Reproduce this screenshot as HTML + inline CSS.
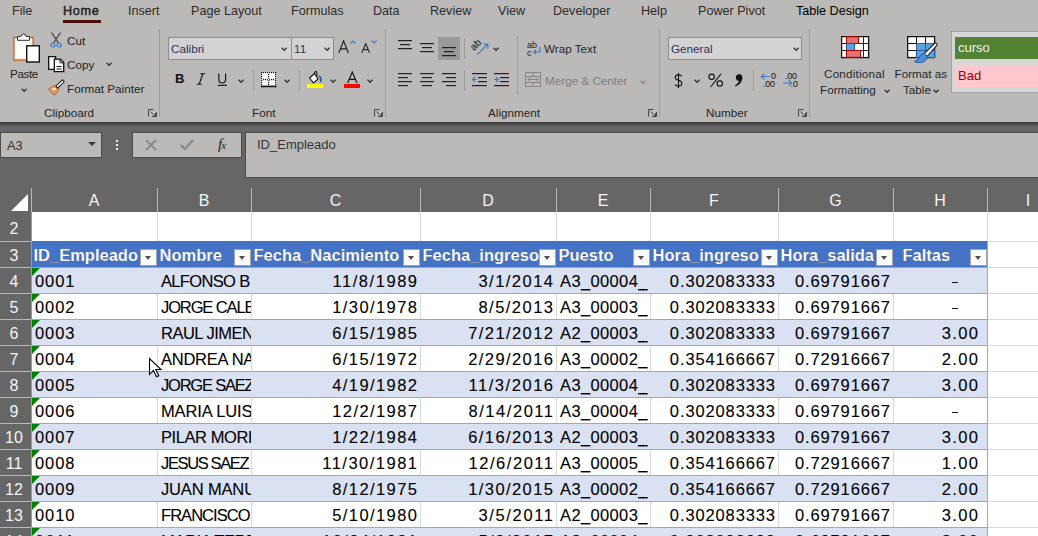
<!DOCTYPE html><html><head><meta charset="utf-8"><style>
*{margin:0;padding:0;box-sizing:border-box}
html,body{width:1038px;height:536px;overflow:hidden;background:#666666;font-family:"Liberation Sans",sans-serif}
.a{position:absolute;white-space:nowrap}
.t{font-size:11.7px;color:#262626;line-height:14px}
.tab{font-size:12.6px;color:#2b2b2b;line-height:16px}
.sep{position:absolute;width:1px;background:#9d9d9d}
.chev{position:absolute;width:5px;height:5px;border-right:1.2px solid #333;border-bottom:1.2px solid #333;transform:rotate(45deg)}
.cell{position:absolute;font-size:16.5px;line-height:20px;color:#000;white-space:nowrap;overflow:hidden;-webkit-text-stroke:0.1px #000}
.hd{font-weight:bold;color:#fff}
.colh{position:absolute;top:188px;height:24px;color:#f4f4f4;font-size:16px;line-height:26px;text-align:center}
.rowh{position:absolute;left:0;width:28px;color:#f4f4f4;font-size:16px;text-align:center}
.flt{position:absolute;width:17px;height:17px;background:#fbfbfb;border:1px solid #a6a6a6}
.flt:after{content:"";position:absolute;left:4px;top:6px;border-left:3.5px solid transparent;border-right:3.5px solid transparent;border-top:4px solid #505050}
.tri{position:absolute;width:0;height:0;border-top:8px solid #008000;border-right:8px solid transparent}
</style></head><body>
<div class="a" style="left:0;top:0;width:1038px;height:122px;background:#bbbab8"></div>
<div class="a" style="left:0;top:122px;width:1038px;height:2px;background:#3e3e3e"></div>
<div class="a" style="left:0;top:124px;width:1038px;height:2px;background:#545454"></div>
<div class="a tab" style="left:12px;top:3px;color:#2b2b2b;font-weight:normal;">File</div>
<div class="a tab" style="left:63px;top:3px;color:#2b2b2b;font-weight:normal;-webkit-text-stroke:0.45px #222;color:#222;letter-spacing:0.7px">Home</div>
<div class="a tab" style="left:128px;top:3px;color:#2b2b2b;font-weight:normal;">Insert</div>
<div class="a tab" style="left:191px;top:3px;color:#2b2b2b;font-weight:normal;">Page Layout</div>
<div class="a tab" style="left:291px;top:3px;color:#2b2b2b;font-weight:normal;">Formulas</div>
<div class="a tab" style="left:373px;top:3px;color:#2b2b2b;font-weight:normal;">Data</div>
<div class="a tab" style="left:430px;top:3px;color:#2b2b2b;font-weight:normal;">Review</div>
<div class="a tab" style="left:498px;top:3px;color:#2b2b2b;font-weight:normal;">View</div>
<div class="a tab" style="left:553px;top:3px;color:#2b2b2b;font-weight:normal;">Developer</div>
<div class="a tab" style="left:641px;top:3px;color:#2b2b2b;font-weight:normal;">Help</div>
<div class="a tab" style="left:698px;top:3px;color:#2b2b2b;font-weight:normal;">Power Pivot</div>
<div class="a tab" style="left:796px;top:3px;color:#000;font-weight:normal;">Table Design</div>
<div class="a" style="left:63px;top:20px;width:38px;height:3px;background:#4d0d0d"></div>
<div class="sep" style="left:159px;top:29px;height:88px"></div>
<div class="sep" style="left:385px;top:29px;height:88px"></div>
<div class="sep" style="left:659px;top:29px;height:88px"></div>
<div class="sep" style="left:809px;top:29px;height:88px"></div>
<div class="a t" style="left:44px;top:106px">Clipboard</div>
<div class="a t" style="left:252px;top:106px">Font</div>
<div class="a t" style="left:488px;top:106px">Alignment</div>
<div class="a t" style="left:706px;top:106px">Number</div>
<svg class="a" style="left:148px;top:109px" width="9" height="8" viewBox="0 0 9 8"><path d="M0.5 7.5V0.5H5.5M8.5 3V7.5H4M2.5 2.5L7.5 7.5M4 7.5H7.5V4" fill="none" stroke="#444" stroke-width="1"/></svg>
<svg class="a" style="left:374px;top:109px" width="9" height="8" viewBox="0 0 9 8"><path d="M0.5 7.5V0.5H5.5M8.5 3V7.5H4M2.5 2.5L7.5 7.5M4 7.5H7.5V4" fill="none" stroke="#444" stroke-width="1"/></svg>
<svg class="a" style="left:648px;top:109px" width="9" height="8" viewBox="0 0 9 8"><path d="M0.5 7.5V0.5H5.5M8.5 3V7.5H4M2.5 2.5L7.5 7.5M4 7.5H7.5V4" fill="none" stroke="#444" stroke-width="1"/></svg>
<svg class="a" style="left:798px;top:109px" width="9" height="8" viewBox="0 0 9 8"><path d="M0.5 7.5V0.5H5.5M8.5 3V7.5H4M2.5 2.5L7.5 7.5M4 7.5H7.5V4" fill="none" stroke="#444" stroke-width="1"/></svg>
<svg class="a" style="left:12px;top:32px" width="30" height="32" viewBox="0 0 30 32">
<rect x="2" y="5.7" width="19" height="22.2" fill="#fff" stroke="#c87533" stroke-width="2"/>
<rect x="3" y="6.7" width="17" height="20.2" fill="none" stroke="#f3dcc4" stroke-width="1"/>
<path d="M5.5 8.3V4.5H9A2.5 2.5 0 0 1 14 4.5H17.5V8.3Z" fill="#fff" stroke="#333" stroke-width="1"/>
<rect x="14.7" y="13.8" width="12.6" height="16.2" fill="#fff" stroke="#111" stroke-width="1.4"/>
</svg>
<div class="a t" style="left:10px;top:67px;color:#222;letter-spacing:-0.4px">Paste</div>
<svg class="a" style="left:20.5px;top:87.5px" width="7" height="5" viewBox="0 0 7 5"><path d="M0.6 0.8L3.1 3.3L5.6 0.8" fill="none" stroke="#333" stroke-width="1.25"/></svg>
<svg class="a" style="left:50px;top:32px" width="12" height="16" viewBox="0 0 12 16">
<path d="M1.5 0.5L8.5 11M10.5 0.5L3.5 11" stroke="#333" stroke-width="1.1" fill="none"/>
<circle cx="3" cy="13" r="2" fill="none" stroke="#3b7ad0" stroke-width="1.2"/>
<circle cx="9" cy="13" r="2" fill="none" stroke="#3b7ad0" stroke-width="1.2"/>
</svg>
<div class="a t" style="left:67px;top:34px;color:#222">Cut</div>
<svg class="a" style="left:48px;top:56px" width="17" height="17" viewBox="0 0 17 17">
<path d="M7.6 3V0.7H0.7V13.4H6" fill="#fff" stroke="#111" stroke-width="1.3"/>
<path d="M6.3 3.1H12.2L15.7 6.6V15.6H6.3Z" fill="#fff" stroke="#111" stroke-width="1.3"/>
<path d="M12 3.1V6.8H15.7" fill="none" stroke="#111" stroke-width="1"/>
<path d="M8.5 10.5H13.5M8.5 13H13.5" stroke="#111" stroke-width="1"/>
</svg>
<div class="a t" style="left:67px;top:58px;color:#222">Copy</div>
<svg class="a" style="left:106px;top:62px" width="7" height="5" viewBox="0 0 7 5"><path d="M0.6 0.8L3.1 3.3L5.6 0.8" fill="none" stroke="#333" stroke-width="1.25"/></svg>
<svg class="a" style="left:48px;top:79px" width="17" height="17" viewBox="0 0 17 17">
<path d="M6.5 6 L11 10.5 L6.8 16.2 Q3 14 0.4 10.2 Z" fill="#e39a5a" stroke="#b8672a" stroke-width="1"/>
<path d="M3 10.2 L7.5 8.5 L8 11 Z" fill="#fff"/>
<path d="M16.2 2.6 L14.4 0.8 L7.8 7.2 L9.8 9.2 Z" fill="#fff" stroke="#222" stroke-width="1.1"/>
</svg>
<div class="a t" style="left:67px;top:82px;color:#222">Format Painter</div>
<div class="a" style="left:168px;top:37px;width:124px;height:23px;background:#d3d3d3;border:1px solid #8e8e8e"></div>
<div class="a" style="left:291px;top:37px;width:43px;height:23px;background:#d3d3d3;border:1px solid #8e8e8e"></div>
<div class="a t" style="left:171px;top:42px;color:#2f2f5f">Calibri</div>
<div class="a t" style="left:294px;top:42px;color:#2f2f5f">11</div>
<svg class="a" style="left:281px;top:47.2px" width="7" height="5" viewBox="0 0 7 5"><path d="M0.6 0.8L3.1 3.3L5.6 0.8" fill="none" stroke="#333" stroke-width="1.25"/></svg>
<svg class="a" style="left:324px;top:47.2px" width="7" height="5" viewBox="0 0 7 5"><path d="M0.6 0.8L3.1 3.3L5.6 0.8" fill="none" stroke="#333" stroke-width="1.25"/></svg>
<svg class="a" style="left:338px;top:40px" width="12" height="14" viewBox="0 0 12 14"><path d="M0.8 13L5.6 0.8L10.4 13M2.6 8.9H8.6" fill="none" stroke="#222" stroke-width="1.15"/></svg>
<svg class="a" style="left:361px;top:43px" width="10" height="11" viewBox="0 0 10 11"><path d="M0.8 9.9L4.7 0.6L8.6 9.9M2.2 6.6H7.2" fill="none" stroke="#222" stroke-width="1.1"/></svg>
<svg class="a" style="left:350px;top:40px" width="6" height="4"><path d="M0.5 3.5L3 1L5.5 3.5" stroke="#3b7ad0" fill="none" stroke-width="1.1"/></svg>
<svg class="a" style="left:371px;top:40px" width="6" height="4"><path d="M0.5 0.5L3 3L5.5 0.5" stroke="#3b7ad0" fill="none" stroke-width="1.1"/></svg>
<div class="a" style="left:175px;top:72px;font-size:13px;font-weight:bold;color:#111;line-height:14px">B</div>
<svg class="a" style="left:196px;top:73px" width="10" height="12" viewBox="0 0 10 12"><path d="M6.8 0.8L3.2 11.2M4.2 0.8H9.2M0.8 11.2H5.8" fill="none" stroke="#111" stroke-width="1.1"/></svg>
<svg class="a" style="left:217px;top:73px" width="11" height="14" viewBox="0 0 11 14"><path d="M1.8 0.5V6.5Q1.8 10 5.2 10Q8.6 10 8.6 6.5V0.5" fill="none" stroke="#111" stroke-width="1.15"/><rect x="0.8" y="11.8" width="9" height="1.1" fill="#111"/></svg>
<svg class="a" style="left:237.5px;top:78.8px" width="7" height="5" viewBox="0 0 7 5"><path d="M0.6 0.8L3.1 3.3L5.6 0.8" fill="none" stroke="#333" stroke-width="1.25"/></svg>
<div class="sep" style="left:253px;top:70px;height:21px"></div>
<svg class="a" style="left:261px;top:72px" width="16" height="16" viewBox="0 0 16 16"><rect x="0" y="0" width="15.2" height="15" fill="#fff"/><g fill="#111"><rect x="0" y="0" width="1.2" height="1.2"/><rect x="0" y="14" width="1.2" height="1.2"/><rect x="0" y="0" width="1.2" height="1.2"/><rect x="14" y="0" width="1.2" height="1.2"/><rect x="2" y="0" width="1.2" height="1.2"/><rect x="2" y="14" width="1.2" height="1.2"/><rect x="0" y="2" width="1.2" height="1.2"/><rect x="14" y="2" width="1.2" height="1.2"/><rect x="4" y="0" width="1.2" height="1.2"/><rect x="4" y="14" width="1.2" height="1.2"/><rect x="0" y="4" width="1.2" height="1.2"/><rect x="14" y="4" width="1.2" height="1.2"/><rect x="6" y="0" width="1.2" height="1.2"/><rect x="6" y="14" width="1.2" height="1.2"/><rect x="0" y="6" width="1.2" height="1.2"/><rect x="14" y="6" width="1.2" height="1.2"/><rect x="8" y="0" width="1.2" height="1.2"/><rect x="8" y="14" width="1.2" height="1.2"/><rect x="0" y="8" width="1.2" height="1.2"/><rect x="14" y="8" width="1.2" height="1.2"/><rect x="10" y="0" width="1.2" height="1.2"/><rect x="10" y="14" width="1.2" height="1.2"/><rect x="0" y="10" width="1.2" height="1.2"/><rect x="14" y="10" width="1.2" height="1.2"/><rect x="12" y="0" width="1.2" height="1.2"/><rect x="12" y="14" width="1.2" height="1.2"/><rect x="0" y="12" width="1.2" height="1.2"/><rect x="14" y="12" width="1.2" height="1.2"/><rect x="14" y="0" width="1.2" height="1.2"/><rect x="14" y="14" width="1.2" height="1.2"/><rect x="0" y="14" width="1.2" height="1.2"/><rect x="14" y="14" width="1.2" height="1.2"/><rect x="7" y="2" width="1.2" height="1.2"/><rect x="2" y="7" width="1.2" height="1.2"/><rect x="7" y="4" width="1.2" height="1.2"/><rect x="4" y="7" width="1.2" height="1.2"/><rect x="7" y="10" width="1.2" height="1.2"/><rect x="10" y="7" width="1.2" height="1.2"/><rect x="7" y="12" width="1.2" height="1.2"/><rect x="12" y="7" width="1.2" height="1.2"/></g><circle cx="7.6" cy="7.6" r="1.1" fill="none" stroke="#111" stroke-width="0.8"/><rect x="0" y="13.6" width="15.3" height="1.5" fill="#111"/></svg>
<svg class="a" style="left:283.5px;top:78.8px" width="7" height="5" viewBox="0 0 7 5"><path d="M0.6 0.8L3.1 3.3L5.6 0.8" fill="none" stroke="#333" stroke-width="1.25"/></svg>
<div class="sep" style="left:299px;top:70px;height:21px"></div>
<svg class="a" style="left:306px;top:70px" width="18" height="18" viewBox="0 0 18 18">
<path d="M3.6 8L8.5 3.5L12 9L7.5 12.9Z" fill="#fff" stroke="#111" stroke-width="1.1" stroke-linejoin="round"/>
<path d="M8.3 4Q8.6 1.3 10 1.6Q11.3 2 10.9 6.5" fill="none" stroke="#111" stroke-width="1.1"/>
<path d="M12.8 6.3Q15.2 6 14.8 12.3" stroke="#2f5fa8" fill="none" stroke-width="1.8"/>
<rect x="1" y="14" width="16.2" height="4" fill="#ffff00"/>
</svg>
<svg class="a" style="left:329.5px;top:78.8px" width="7" height="5" viewBox="0 0 7 5"><path d="M0.6 0.8L3.1 3.3L5.6 0.8" fill="none" stroke="#333" stroke-width="1.25"/></svg>
<svg class="a" style="left:346px;top:71px" width="13" height="13" viewBox="0 0 13 13"><path d="M1.6 12L6.3 1.1L11 12M3.3 8.3H9.3" fill="none" stroke="#111" stroke-width="1.15"/></svg>
<div class="a" style="left:344px;top:84px;width:16px;height:4px;background:#ff0000"></div>
<svg class="a" style="left:366.5px;top:78.8px" width="7" height="5" viewBox="0 0 7 5"><path d="M0.6 0.8L3.1 3.3L5.6 0.8" fill="none" stroke="#333" stroke-width="1.25"/></svg>
<div class="a" style="left:438px;top:37px;width:22px;height:23px;background:#9a9a9a"></div>
<svg class="a" style="left:398px;top:38px" width="16" height="14"><rect x="0" y="2" width="14" height="1.2" fill="#222"/><rect x="2" y="6" width="10" height="1.2" fill="#222"/><rect x="0" y="10" width="14" height="1.2" fill="#222"/></svg>
<svg class="a" style="left:420px;top:41px" width="16" height="14"><rect x="0" y="2" width="14" height="1.2" fill="#222"/><rect x="2" y="6" width="10" height="1.2" fill="#222"/><rect x="0" y="10" width="14" height="1.2" fill="#222"/></svg>
<svg class="a" style="left:442px;top:45px" width="16" height="14"><rect x="0" y="2" width="14" height="1.2" fill="#222"/><rect x="2" y="6" width="10" height="1.2" fill="#222"/><rect x="0" y="10" width="14" height="1.2" fill="#222"/></svg>
<svg class="a" style="left:398px;top:71px" width="16" height="18"><rect x="0" y="2" width="14" height="1.2" fill="#222"/><rect x="0" y="6" width="10" height="1.2" fill="#222"/><rect x="0" y="10" width="14" height="1.2" fill="#222"/><rect x="0" y="14" width="10" height="1.2" fill="#222"/></svg>
<svg class="a" style="left:420px;top:71px" width="16" height="18"><rect x="0" y="2" width="14" height="1.2" fill="#222"/><rect x="2" y="6" width="10" height="1.2" fill="#222"/><rect x="0" y="10" width="14" height="1.2" fill="#222"/><rect x="2" y="14" width="10" height="1.2" fill="#222"/></svg>
<svg class="a" style="left:442px;top:71px" width="16" height="18"><rect x="0" y="2" width="14" height="1.2" fill="#222"/><rect x="4" y="6" width="10" height="1.2" fill="#222"/><rect x="0" y="10" width="14" height="1.2" fill="#222"/><rect x="4" y="14" width="10" height="1.2" fill="#222"/></svg>
<div class="sep" style="left:464px;top:38px;height:21px"></div>
<div class="sep" style="left:464px;top:70px;height:21px"></div>
<div class="sep" style="left:517px;top:36px;height:58px"></div>
<svg class="a" style="left:470px;top:38px" width="20" height="18" viewBox="0 0 20 18">
<text x="0" y="0" font-size="10" font-family="Liberation Sans" fill="#111" transform="translate(4,13) rotate(-45)">ab</text>
<path d="M7.2 16.6L17.6 6.4M13.6 6.2H17.8V10.4" stroke="#3b7ad0" fill="none" stroke-width="1.2"/>
</svg>
<svg class="a" style="left:492.5px;top:46.8px" width="7" height="5" viewBox="0 0 7 5"><path d="M0.6 0.8L3.1 3.3L5.6 0.8" fill="none" stroke="#333" stroke-width="1.25"/></svg>
<svg class="a" style="left:472px;top:73px" width="16" height="14" viewBox="0 0 16 14">
<rect x="0" y="0" width="15" height="1.2" fill="#222"/><rect x="6" y="4" width="9" height="1.2" fill="#222"/>
<rect x="6" y="8" width="9" height="1.2" fill="#222"/><rect x="0" y="12" width="15" height="1.2" fill="#222"/>
<path d="M0.5 6.5H5M3 4L0.5 6.5L3 9" stroke="#3b7ad0" fill="none" stroke-width="1.1"/>
</svg>
<svg class="a" style="left:494px;top:73px" width="16" height="14" viewBox="0 0 16 14">
<rect x="0" y="0" width="15" height="1.2" fill="#222"/><rect x="6" y="4" width="9" height="1.2" fill="#222"/>
<rect x="6" y="8" width="9" height="1.2" fill="#222"/><rect x="0" y="12" width="15" height="1.2" fill="#222"/>
<path d="M0 6.5H4.5M2 4L4.5 6.5L2 9" stroke="#3b7ad0" fill="none" stroke-width="1.1"/>
</svg>
<svg class="a" style="left:527px;top:40px" width="16" height="17" viewBox="0 0 16 17">
<text x="0" y="8" font-size="9" font-family="Liberation Sans" fill="#222">ab</text>
<text x="0" y="16" font-size="9" font-family="Liberation Sans" fill="#222">c</text>
<path d="M13 7V12H7M9 10L7 12L9 14" stroke="#3b7ad0" fill="none" stroke-width="1.2"/>
</svg>
<div class="a t" style="left:544px;top:42px">Wrap Text</div>
<svg class="a" style="left:525px;top:72px" width="16" height="15" viewBox="0 0 16 15">
<rect x="0.5" y="0.5" width="15" height="14" fill="none" stroke="#888" stroke-width="1"/>
<path d="M0.5 4.5H15.5M0.5 10.5H15.5M8 0.5V4.5M8 10.5V14.5" stroke="#888"/>
<path d="M3 7.5H13M5 5.5L3 7.5L5 9.5M11 5.5L13 7.5L11 9.5" stroke="#888" fill="none"/>
</svg>
<div class="a t" style="left:545px;top:74px;color:#808080">Merge &amp; Center</div>
<svg class="a" style="left:640px;top:79.5px" width="7" height="5" viewBox="0 0 7 5"><path d="M0.6 0.8L3.1 3.3L5.6 0.8" fill="none" stroke="#888" stroke-width="1.25"/></svg>
<div class="a" style="left:668px;top:37px;width:134px;height:23px;background:#d3d3d3;border:1px solid #8e8e8e"></div>
<div class="a t" style="left:671px;top:42px;color:#2f2f5f">General</div>
<svg class="a" style="left:792.5px;top:47.4px" width="7" height="5" viewBox="0 0 7 5"><path d="M0.6 0.8L3.1 3.3L5.6 0.8" fill="none" stroke="#333" stroke-width="1.25"/></svg>
<svg class="a" style="left:674px;top:73px" width="9" height="15" viewBox="0 0 9 15"><path d="M7.8 3.3Q7 1.9 4.5 1.9Q1.2 1.9 1.2 4.5Q1.2 6.4 4.5 7.3Q7.9 8.2 7.9 10.6Q7.9 13.1 4.5 13.1Q2 13.1 0.9 11.6M4.5 0V15" fill="none" stroke="#111" stroke-width="1.1"/></svg>
<svg class="a" style="left:693.5px;top:79px" width="7" height="5" viewBox="0 0 7 5"><path d="M0.6 0.8L3.1 3.3L5.6 0.8" fill="none" stroke="#333" stroke-width="1.25"/></svg>
<svg class="a" style="left:708px;top:73px" width="16" height="15" viewBox="0 0 16 15"><circle cx="3.6" cy="3.8" r="2.7" fill="none" stroke="#111" stroke-width="1.1"/><circle cx="11.8" cy="10.6" r="2.7" fill="none" stroke="#111" stroke-width="1.1"/><path d="M13 0.8L2.6 14" stroke="#111" stroke-width="1.1"/></svg>
<svg class="a" style="left:734px;top:74px" width="10" height="13" viewBox="0 0 10 13"><path d="M5 0.3A3.3 3.3 0 0 1 8.4 3.7Q8.5 9.2 1.3 12.6L0.8 11.7Q4.6 9.2 5.3 6.8A3.2 3.2 0 0 1 5 0.3Z" fill="#111"/></svg>
<div class="sep" style="left:753px;top:70px;height:21px"></div>
<svg class="a" style="left:760px;top:72px" width="18" height="16" viewBox="0 0 18 16">
<path d="M1.5 4.5H9.5M4.3 1.7L1.5 4.5L4.3 7.3" stroke="#3b7ad0" fill="none" stroke-width="1.2"/>
<text x="11" y="7.3" font-size="9" font-family="Liberation Sans" fill="#111">0</text>
<text x="3" y="15" font-size="9" font-family="Liberation Sans" fill="#111" letter-spacing="-0.3">.00</text>
</svg>
<svg class="a" style="left:782px;top:72px" width="18" height="16" viewBox="0 0 18 16">
<text x="3" y="7.3" font-size="9" font-family="Liberation Sans" fill="#111" letter-spacing="-0.3">.00</text>
<path d="M1 11H9.5M6.7 8.2L9.5 11L6.7 13.8" stroke="#3b7ad0" fill="none" stroke-width="1.2"/>
<text x="8.5" y="15" font-size="9" font-family="Liberation Sans" fill="#111">.0</text>
</svg>
<svg class="a" style="left:841px;top:36px" width="29" height="23" viewBox="0 0 29 23">
<rect x="0.6" y="0.6" width="27" height="21" fill="#fff" stroke="#111" stroke-width="1.3"/>
<path d="M0.5 7.5H28M0.5 14.5H28M5.5 0.5V22M22.5 0.5V22" stroke="#222" stroke-width="1"/>
<rect x="5.5" y="0.8" width="12" height="6.7" fill="#e07272" stroke="#b00000" stroke-width="1"/>
<rect x="5.5" y="7.5" width="8" height="7" fill="#5ba3dc" stroke="#1f4fa0" stroke-width="1"/>
<path d="M13.5 8V14" stroke="#fff" stroke-width="0"/>
<rect x="5.5" y="14.5" width="14" height="6.8" fill="#e07272" stroke="#b00000" stroke-width="1"/>
</svg>
<div class="a t" style="left:824px;top:67px;letter-spacing:0.2px">Conditional</div>
<div class="a t" style="left:820px;top:83px">Formatting</div>
<svg class="a" style="left:883.5px;top:88.5px" width="7" height="5" viewBox="0 0 7 5"><path d="M0.6 0.8L3.1 3.3L5.6 0.8" fill="none" stroke="#333" stroke-width="1.25"/></svg>
<svg class="a" style="left:907px;top:36px" width="31" height="28" viewBox="0 0 31 28">
<rect x="0.6" y="0.6" width="27" height="21" fill="#fff" stroke="#111" stroke-width="1.3"/>
<rect x="9.5" y="7.5" width="18" height="14" fill="#5ba3dc" stroke="#2a5caa" stroke-width="1"/>
<path d="M0.5 7.5H9.5M0.5 14.5H9.5M9.5 0.5V7.5M18.5 0.5V7.5" stroke="#111" stroke-width="1"/>
<path d="M9.5 14.5H27.5M18.5 7.5V21.5" stroke="#2a5caa" stroke-width="1"/>
<path d="M28.3 6.8Q30.6 7.2 29.8 9.4L20.2 20.3L17.3 17.6Z" fill="#fff" stroke="#222" stroke-width="1.1"/>
<path d="M17 17.3L20.3 20.6Q19.5 25.5 14 26.5Q10 27.2 7.3 25.6Q10.8 25 12 21.8Q13 18 17 17.3Z" fill="#4f8fd8" stroke="#2a5caa" stroke-width="1"/>
</svg>
<div class="a t" style="left:894.5px;top:67px">Format as</div>
<div class="a t" style="left:903px;top:83px">Table</div>
<svg class="a" style="left:933px;top:88.5px" width="7" height="5" viewBox="0 0 7 5"><path d="M0.6 0.8L3.1 3.3L5.6 0.8" fill="none" stroke="#333" stroke-width="1.25"/></svg>
<div class="a" style="left:951px;top:31px;width:100px;height:62px;background:#d6d6d6;border:1px solid #a0a0a0"></div>
<div class="a" style="left:955px;top:37px;width:90px;height:22px;background:#548235"></div>
<div class="a t" style="left:958px;top:41px;color:#f4f4ea;font-size:13px">curso</div>
<div class="a" style="left:955px;top:65px;width:90px;height:22px;background:#ffc7ce"></div>
<div class="a t" style="left:958px;top:69px;color:#9c0006;font-size:13px">Bad</div>
<div class="a" style="left:0px;top:132px;width:102px;height:26px;background:#bbbab8;border:1px solid #4a4a4a"></div>
<div class="a t" style="left:7px;top:139px;color:#333;font-size:12.8px">A3</div>
<div class="a" style="left:88px;top:142px;border-left:4px solid transparent;border-right:4px solid transparent;border-top:4px solid #3a3a3a"></div>
<div class="a" style="left:116px;top:140px;width:2px;height:2px;background:#eee;box-shadow:0 4px 0 #eee,0 8px 0 #eee"></div>
<div class="a" style="left:132px;top:132px;width:110px;height:26px;background:#bbbab8;border:1px solid #4a4a4a"></div>
<svg class="a" style="left:145px;top:139px" width="12" height="12"><path d="M1 1L11 11M11 1L1 11" stroke="#8a8a8a" stroke-width="1.9"/></svg>
<svg class="a" style="left:180px;top:139px" width="14" height="12"><path d="M1 6L5 10L13 1" stroke="#8a8a8a" stroke-width="2.4" fill="none"/></svg>
<div class="a" style="left:218px;top:137px;font-family:'Liberation Serif',serif;font-style:italic;font-size:15px;color:#222;line-height:15px">f<span style="font-size:11px;margin-left:-1px">x</span></div>
<div class="a" style="left:245px;top:132px;width:800px;height:46px;background:#bbbab8;border:1px solid #4a4a4a"></div>
<div class="a t" style="left:257px;top:138px;color:#333;font-size:13px">ID_Empleado</div>
<div class="a" style="left:0;top:188px;width:1038px;height:24px;background:#666666"></div>
<div class="a" style="left:11px;top:194px;width:0;height:0;border-left:17px solid transparent;border-bottom:17px solid #fff"></div>
<div class="colh" style="left:31px;width:126px">A</div>
<div class="a" style="left:31px;top:188px;width:1px;height:24px;background:#b8b8b8"></div>
<div class="colh" style="left:157px;width:94px">B</div>
<div class="a" style="left:157px;top:188px;width:1px;height:24px;background:#b8b8b8"></div>
<div class="colh" style="left:251px;width:169px">C</div>
<div class="a" style="left:251px;top:188px;width:1px;height:24px;background:#b8b8b8"></div>
<div class="colh" style="left:420px;width:136px">D</div>
<div class="a" style="left:420px;top:188px;width:1px;height:24px;background:#b8b8b8"></div>
<div class="colh" style="left:556px;width:94px">E</div>
<div class="a" style="left:556px;top:188px;width:1px;height:24px;background:#b8b8b8"></div>
<div class="colh" style="left:650px;width:128px">F</div>
<div class="a" style="left:650px;top:188px;width:1px;height:24px;background:#b8b8b8"></div>
<div class="colh" style="left:778px;width:115px">G</div>
<div class="a" style="left:778px;top:188px;width:1px;height:24px;background:#b8b8b8"></div>
<div class="colh" style="left:893px;width:94px">H</div>
<div class="a" style="left:893px;top:188px;width:1px;height:24px;background:#b8b8b8"></div>
<div class="colh" style="left:987px;width:82px">I</div>
<div class="a" style="left:987px;top:188px;width:1px;height:24px;background:#b8b8b8"></div>
<div class="a" style="left:31px;top:212px;width:1007px;height:324px;background:#fff"></div>
<div class="a" style="left:0;top:212px;width:31px;height:324px;background:#666666"></div>
<div class="a" style="left:31px;top:212px;width:1px;height:324px;background:#9a9a9a"></div>
<div class="a" style="left:0;top:241px;width:31px;height:1px;background:#b8b8b8"></div>
<div class="a" style="left:32px;top:241px;width:1006px;height:1px;background:#d9d9d9"></div>
<div class="a" style="left:0;top:267px;width:31px;height:1px;background:#b8b8b8"></div>
<div class="a" style="left:32px;top:267px;width:1006px;height:1px;background:#d9d9d9"></div>
<div class="a" style="left:0;top:293px;width:31px;height:1px;background:#b8b8b8"></div>
<div class="a" style="left:32px;top:293px;width:1006px;height:1px;background:#d9d9d9"></div>
<div class="a" style="left:0;top:319px;width:31px;height:1px;background:#b8b8b8"></div>
<div class="a" style="left:32px;top:319px;width:1006px;height:1px;background:#d9d9d9"></div>
<div class="a" style="left:0;top:345px;width:31px;height:1px;background:#b8b8b8"></div>
<div class="a" style="left:32px;top:345px;width:1006px;height:1px;background:#d9d9d9"></div>
<div class="a" style="left:0;top:371px;width:31px;height:1px;background:#b8b8b8"></div>
<div class="a" style="left:32px;top:371px;width:1006px;height:1px;background:#d9d9d9"></div>
<div class="a" style="left:0;top:397px;width:31px;height:1px;background:#b8b8b8"></div>
<div class="a" style="left:32px;top:397px;width:1006px;height:1px;background:#d9d9d9"></div>
<div class="a" style="left:0;top:423px;width:31px;height:1px;background:#b8b8b8"></div>
<div class="a" style="left:32px;top:423px;width:1006px;height:1px;background:#d9d9d9"></div>
<div class="a" style="left:0;top:449px;width:31px;height:1px;background:#b8b8b8"></div>
<div class="a" style="left:32px;top:449px;width:1006px;height:1px;background:#d9d9d9"></div>
<div class="a" style="left:0;top:475px;width:31px;height:1px;background:#b8b8b8"></div>
<div class="a" style="left:32px;top:475px;width:1006px;height:1px;background:#d9d9d9"></div>
<div class="a" style="left:0;top:501px;width:31px;height:1px;background:#b8b8b8"></div>
<div class="a" style="left:32px;top:501px;width:1006px;height:1px;background:#d9d9d9"></div>
<div class="a" style="left:0;top:527px;width:31px;height:1px;background:#b8b8b8"></div>
<div class="a" style="left:32px;top:527px;width:1006px;height:1px;background:#d9d9d9"></div>
<div class="a" style="left:0;top:553px;width:31px;height:1px;background:#b8b8b8"></div>
<div class="a" style="left:32px;top:553px;width:1006px;height:1px;background:#d9d9d9"></div>
<div class="a" style="left:157px;top:212px;width:1px;height:324px;background:#d9d9d9"></div>
<div class="a" style="left:251px;top:212px;width:1px;height:324px;background:#d9d9d9"></div>
<div class="a" style="left:420px;top:212px;width:1px;height:324px;background:#d9d9d9"></div>
<div class="a" style="left:556px;top:212px;width:1px;height:324px;background:#d9d9d9"></div>
<div class="a" style="left:650px;top:212px;width:1px;height:324px;background:#d9d9d9"></div>
<div class="a" style="left:778px;top:212px;width:1px;height:324px;background:#d9d9d9"></div>
<div class="a" style="left:893px;top:212px;width:1px;height:324px;background:#d9d9d9"></div>
<div class="a" style="left:987px;top:212px;width:1px;height:324px;background:#d9d9d9"></div>
<div class="rowh a" style="top:212px;height:29px;line-height:33px">2</div>
<div class="rowh a" style="top:241px;height:26px;line-height:30px">3</div>
<div class="rowh a" style="top:267px;height:26px;line-height:30px">4</div>
<div class="rowh a" style="top:293px;height:26px;line-height:30px">5</div>
<div class="rowh a" style="top:319px;height:26px;line-height:30px">6</div>
<div class="rowh a" style="top:345px;height:26px;line-height:30px">7</div>
<div class="rowh a" style="top:371px;height:26px;line-height:30px">8</div>
<div class="rowh a" style="top:397px;height:26px;line-height:30px">9</div>
<div class="rowh a" style="top:423px;height:26px;line-height:30px">10</div>
<div class="rowh a" style="top:449px;height:26px;line-height:30px">11</div>
<div class="rowh a" style="top:475px;height:26px;line-height:30px">12</div>
<div class="rowh a" style="top:501px;height:26px;line-height:30px">13</div>
<div class="rowh a" style="top:527px;height:26px;line-height:30px">14</div>
<div class="a" style="left:32px;top:241px;width:955px;height:26px;background:#4472c4"></div>
<div class="cell hd" style="left:33.5px;top:245px">ID_Empleado</div>
<div class="flt" style="left:140px;top:249px"></div>
<div class="cell hd" style="left:159.5px;top:245px">Nombre</div>
<div class="flt" style="left:234px;top:249px"></div>
<div class="cell hd" style="left:253.5px;top:245px">Fecha_Nacimiento</div>
<div class="flt" style="left:403px;top:249px"></div>
<div class="cell hd" style="left:422.5px;top:245px">Fecha_ingreso</div>
<div class="flt" style="left:539px;top:249px"></div>
<div class="cell hd" style="left:558.5px;top:245px">Puesto</div>
<div class="flt" style="left:633px;top:249px"></div>
<div class="cell hd" style="left:652.5px;top:245px">Hora_ingreso</div>
<div class="flt" style="left:761px;top:249px"></div>
<div class="cell hd" style="left:780.5px;top:245px">Hora_salida</div>
<div class="flt" style="left:876px;top:249px"></div>
<div class="cell hd" style="left:902.5px;top:245px">Faltas</div>
<div class="flt" style="left:970px;top:249px"></div>
<div class="a" style="left:32px;top:267px;width:955px;height:26px;background:#d9e1f2"></div>
<div class="a" style="left:32px;top:267px;width:956px;height:1px;background:#8ea9db"></div>
<div class="cell" style="left:35px;top:271px;width:122px;letter-spacing:0.91px">0001</div>
<div class="cell" style="left:161px;top:271px;width:90px;letter-spacing:-0.66px">ALFONSO B</div>
<div class="cell" style="left:251px;top:271px;width:167.6px;text-align:right;letter-spacing:1.55px">11/8/1989</div>
<div class="cell" style="left:420px;top:271px;width:134.5px;text-align:right;letter-spacing:1.48px">3/1/2014</div>
<div class="cell" style="left:560px;top:271px;width:90px;letter-spacing:0.37px">A3_00004_</div>
<div class="cell" style="left:650px;top:271px;width:125.9px;text-align:right;letter-spacing:0.88px">0.302083333</div>
<div class="cell" style="left:778px;top:271px;width:112.9px;text-align:right;letter-spacing:0.88px">0.69791667</div>
<div class="a" style="left:952px;top:282px;width:5.5px;height:1.3px;background:#111"></div>
<div class="tri" style="left:32px;top:268px"></div>
<div class="a" style="left:32px;top:293px;width:956px;height:1px;background:#8ea9db"></div>
<div class="cell" style="left:35px;top:297px;width:122px;letter-spacing:0.91px">0002</div>
<div class="cell" style="left:161px;top:297px;width:90px;letter-spacing:-1.12px">JORGE CALERO</div>
<div class="cell" style="left:251px;top:297px;width:167.4px;text-align:right;letter-spacing:1.42px">1/30/1978</div>
<div class="cell" style="left:420px;top:297px;width:134.5px;text-align:right;letter-spacing:1.48px">8/5/2013</div>
<div class="cell" style="left:560px;top:297px;width:90px;letter-spacing:0.37px">A3_00003_</div>
<div class="cell" style="left:650px;top:297px;width:125.9px;text-align:right;letter-spacing:0.88px">0.302083333</div>
<div class="cell" style="left:778px;top:297px;width:112.9px;text-align:right;letter-spacing:0.88px">0.69791667</div>
<div class="a" style="left:952px;top:308px;width:5.5px;height:1.3px;background:#111"></div>
<div class="tri" style="left:32px;top:294px"></div>
<div class="a" style="left:32px;top:319px;width:955px;height:26px;background:#d9e1f2"></div>
<div class="a" style="left:32px;top:319px;width:956px;height:1px;background:#8ea9db"></div>
<div class="cell" style="left:35px;top:323px;width:122px;letter-spacing:0.91px">0003</div>
<div class="cell" style="left:161px;top:323px;width:90px;letter-spacing:-0.50px">RAUL JIMENEZ</div>
<div class="cell" style="left:251px;top:323px;width:167.4px;text-align:right;letter-spacing:1.42px">6/15/1985</div>
<div class="cell" style="left:420px;top:323px;width:134.4px;text-align:right;letter-spacing:1.42px">7/21/2012</div>
<div class="cell" style="left:560px;top:323px;width:90px;letter-spacing:0.37px">A2_00003_</div>
<div class="cell" style="left:650px;top:323px;width:125.9px;text-align:right;letter-spacing:0.88px">0.302083333</div>
<div class="cell" style="left:778px;top:323px;width:112.9px;text-align:right;letter-spacing:0.88px">0.69791667</div>
<div class="cell" style="left:893px;top:323px;width:86.4px;text-align:right;letter-spacing:1.39px">3.00</div>
<div class="tri" style="left:32px;top:320px"></div>
<div class="a" style="left:32px;top:345px;width:956px;height:1px;background:#8ea9db"></div>
<div class="cell" style="left:35px;top:349px;width:122px;letter-spacing:0.91px">0004</div>
<div class="cell" style="left:161px;top:349px;width:90px;letter-spacing:-0.25px">ANDREA NAVARRO</div>
<div class="cell" style="left:251px;top:349px;width:167.4px;text-align:right;letter-spacing:1.42px">6/15/1972</div>
<div class="cell" style="left:420px;top:349px;width:134.4px;text-align:right;letter-spacing:1.42px">2/29/2016</div>
<div class="cell" style="left:560px;top:349px;width:90px;letter-spacing:0.37px">A3_00002_</div>
<div class="cell" style="left:650px;top:349px;width:125.9px;text-align:right;letter-spacing:0.88px">0.354166667</div>
<div class="cell" style="left:778px;top:349px;width:112.9px;text-align:right;letter-spacing:0.88px">0.72916667</div>
<div class="cell" style="left:893px;top:349px;width:86.4px;text-align:right;letter-spacing:1.39px">2.00</div>
<div class="tri" style="left:32px;top:346px"></div>
<div class="a" style="left:32px;top:371px;width:955px;height:26px;background:#d9e1f2"></div>
<div class="a" style="left:32px;top:371px;width:956px;height:1px;background:#8ea9db"></div>
<div class="cell" style="left:35px;top:375px;width:122px;letter-spacing:0.91px">0005</div>
<div class="cell" style="left:161px;top:375px;width:90px;letter-spacing:-1.21px">JORGE SAEZ</div>
<div class="cell" style="left:251px;top:375px;width:167.4px;text-align:right;letter-spacing:1.42px">4/19/1982</div>
<div class="cell" style="left:420px;top:375px;width:134.6px;text-align:right;letter-spacing:1.55px">11/3/2016</div>
<div class="cell" style="left:560px;top:375px;width:90px;letter-spacing:0.37px">A3_00004_</div>
<div class="cell" style="left:650px;top:375px;width:125.9px;text-align:right;letter-spacing:0.88px">0.302083333</div>
<div class="cell" style="left:778px;top:375px;width:112.9px;text-align:right;letter-spacing:0.88px">0.69791667</div>
<div class="cell" style="left:893px;top:375px;width:86.4px;text-align:right;letter-spacing:1.39px">3.00</div>
<div class="tri" style="left:32px;top:372px"></div>
<div class="a" style="left:32px;top:397px;width:956px;height:1px;background:#8ea9db"></div>
<div class="cell" style="left:35px;top:401px;width:122px;letter-spacing:0.91px">0006</div>
<div class="cell" style="left:161px;top:401px;width:90px;letter-spacing:-0.12px">MARIA LUISA</div>
<div class="cell" style="left:251px;top:401px;width:167.4px;text-align:right;letter-spacing:1.42px">12/2/1987</div>
<div class="cell" style="left:420px;top:401px;width:134.6px;text-align:right;letter-spacing:1.55px">8/14/2011</div>
<div class="cell" style="left:560px;top:401px;width:90px;letter-spacing:0.37px">A3_00004_</div>
<div class="cell" style="left:650px;top:401px;width:125.9px;text-align:right;letter-spacing:0.88px">0.302083333</div>
<div class="cell" style="left:778px;top:401px;width:112.9px;text-align:right;letter-spacing:0.88px">0.69791667</div>
<div class="a" style="left:952px;top:412px;width:5.5px;height:1.3px;background:#111"></div>
<div class="tri" style="left:32px;top:398px"></div>
<div class="a" style="left:32px;top:423px;width:955px;height:26px;background:#d9e1f2"></div>
<div class="a" style="left:32px;top:423px;width:956px;height:1px;background:#8ea9db"></div>
<div class="cell" style="left:35px;top:427px;width:122px;letter-spacing:0.91px">0007</div>
<div class="cell" style="left:161px;top:427px;width:90px;letter-spacing:-0.42px">PILAR MORENO</div>
<div class="cell" style="left:251px;top:427px;width:167.4px;text-align:right;letter-spacing:1.42px">1/22/1984</div>
<div class="cell" style="left:420px;top:427px;width:134.4px;text-align:right;letter-spacing:1.42px">6/16/2013</div>
<div class="cell" style="left:560px;top:427px;width:90px;letter-spacing:0.37px">A2_00003_</div>
<div class="cell" style="left:650px;top:427px;width:125.9px;text-align:right;letter-spacing:0.88px">0.302083333</div>
<div class="cell" style="left:778px;top:427px;width:112.9px;text-align:right;letter-spacing:0.88px">0.69791667</div>
<div class="cell" style="left:893px;top:427px;width:86.4px;text-align:right;letter-spacing:1.39px">3.00</div>
<div class="tri" style="left:32px;top:424px"></div>
<div class="a" style="left:32px;top:449px;width:956px;height:1px;background:#8ea9db"></div>
<div class="cell" style="left:35px;top:453px;width:122px;letter-spacing:0.91px">0008</div>
<div class="cell" style="left:161px;top:453px;width:90px;letter-spacing:-1.37px">JESUS SAEZ</div>
<div class="cell" style="left:251px;top:453px;width:167.5px;text-align:right;letter-spacing:1.49px">11/30/1981</div>
<div class="cell" style="left:420px;top:453px;width:134.6px;text-align:right;letter-spacing:1.55px">12/6/2011</div>
<div class="cell" style="left:560px;top:453px;width:90px;letter-spacing:0.37px">A3_00005_</div>
<div class="cell" style="left:650px;top:453px;width:125.9px;text-align:right;letter-spacing:0.88px">0.354166667</div>
<div class="cell" style="left:778px;top:453px;width:112.9px;text-align:right;letter-spacing:0.88px">0.72916667</div>
<div class="cell" style="left:893px;top:453px;width:86.4px;text-align:right;letter-spacing:1.39px">1.00</div>
<div class="tri" style="left:32px;top:450px"></div>
<div class="a" style="left:32px;top:475px;width:955px;height:26px;background:#d9e1f2"></div>
<div class="a" style="left:32px;top:475px;width:956px;height:1px;background:#8ea9db"></div>
<div class="cell" style="left:35px;top:479px;width:122px;letter-spacing:0.91px">0009</div>
<div class="cell" style="left:161px;top:479px;width:90px;letter-spacing:-0.15px">JUAN MANUEL</div>
<div class="cell" style="left:251px;top:479px;width:167.4px;text-align:right;letter-spacing:1.42px">8/12/1975</div>
<div class="cell" style="left:420px;top:479px;width:134.4px;text-align:right;letter-spacing:1.42px">1/30/2015</div>
<div class="cell" style="left:560px;top:479px;width:90px;letter-spacing:0.37px">A3_00002_</div>
<div class="cell" style="left:650px;top:479px;width:125.9px;text-align:right;letter-spacing:0.88px">0.354166667</div>
<div class="cell" style="left:778px;top:479px;width:112.9px;text-align:right;letter-spacing:0.88px">0.72916667</div>
<div class="cell" style="left:893px;top:479px;width:86.4px;text-align:right;letter-spacing:1.39px">2.00</div>
<div class="tri" style="left:32px;top:476px"></div>
<div class="a" style="left:32px;top:501px;width:956px;height:1px;background:#8ea9db"></div>
<div class="cell" style="left:35px;top:505px;width:122px;letter-spacing:0.91px">0010</div>
<div class="cell" style="left:161px;top:505px;width:90px;letter-spacing:-0.95px">FRANCISCO</div>
<div class="cell" style="left:251px;top:505px;width:167.4px;text-align:right;letter-spacing:1.42px">5/10/1980</div>
<div class="cell" style="left:420px;top:505px;width:134.6px;text-align:right;letter-spacing:1.63px">3/5/2011</div>
<div class="cell" style="left:560px;top:505px;width:90px;letter-spacing:0.37px">A2_00003_</div>
<div class="cell" style="left:650px;top:505px;width:125.9px;text-align:right;letter-spacing:0.88px">0.302083333</div>
<div class="cell" style="left:778px;top:505px;width:112.9px;text-align:right;letter-spacing:0.88px">0.69791667</div>
<div class="cell" style="left:893px;top:505px;width:86.4px;text-align:right;letter-spacing:1.39px">3.00</div>
<div class="tri" style="left:32px;top:502px"></div>
<div class="a" style="left:32px;top:527px;width:955px;height:26px;background:#d9e1f2"></div>
<div class="a" style="left:32px;top:527px;width:956px;height:1px;background:#8ea9db"></div>
<div class="cell" style="left:35px;top:531px;width:122px;letter-spacing:1.21px">0011</div>
<div class="cell" style="left:161px;top:531px;width:90px;letter-spacing:-0.39px">MARIA TERE</div>
<div class="cell" style="left:251px;top:531px;width:167.4px;text-align:right;letter-spacing:1.37px">10/24/1981</div>
<div class="cell" style="left:420px;top:531px;width:134.5px;text-align:right;letter-spacing:1.48px">5/8/2017</div>
<div class="cell" style="left:560px;top:531px;width:90px;letter-spacing:0.37px">A2_00004_</div>
<div class="cell" style="left:650px;top:531px;width:125.9px;text-align:right;letter-spacing:0.88px">0.302083333</div>
<div class="cell" style="left:778px;top:531px;width:112.9px;text-align:right;letter-spacing:0.88px">0.69791667</div>
<div class="cell" style="left:893px;top:531px;width:86.4px;text-align:right;letter-spacing:1.39px">2.00</div>
<div class="tri" style="left:32px;top:528px"></div>
<div class="a" style="left:987px;top:241px;width:1px;height:300px;background:#8ea9db"></div>
<svg class="a" style="left:148px;top:357px" width="14" height="21" viewBox="0 0 14 21"><path d="M1.5 1.5V17.5L5.5 13.5L8.5 19.8L10.8 18.8L7.8 12.5H13Z" fill="#fff" stroke="#000" stroke-width="1.1" stroke-linejoin="miter"/></svg>
</body></html>
